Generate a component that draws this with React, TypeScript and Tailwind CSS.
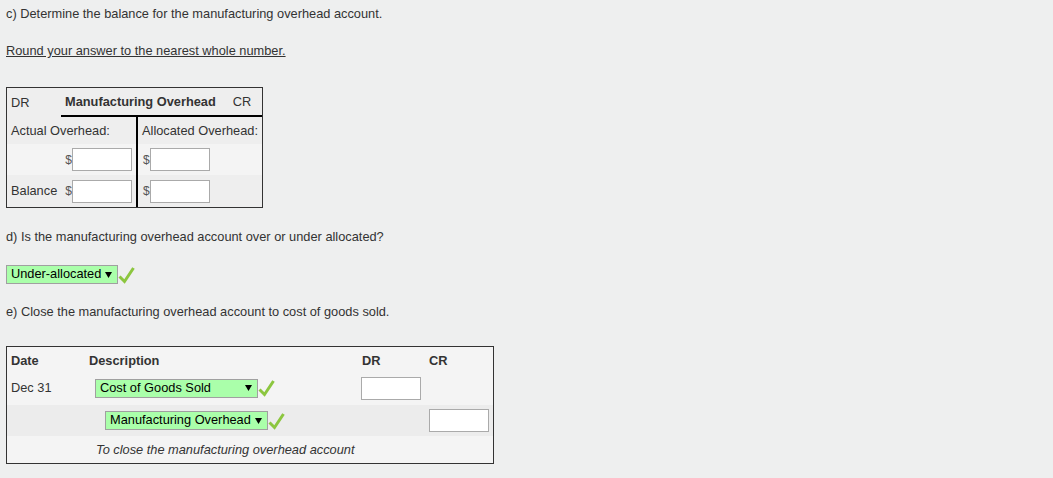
// Manufacturing overhead T-account and closing journal entry.
const FONT = "font-['Liberation_Sans',Arial,sans-serif]";

function Check() {
  return (
    <svg width="17" height="18" viewBox="0 0 17 18" className="flex-none">
      <path d="M1.5 10.5 L6.5 15.5 L15.5 2" fill="none" stroke="#8cc63f" strokeWidth="3" strokeLinejoin="miter" />
    </svg>
  );
}

function Pick({ label, w }: { label: string; w: string }) {
  return (
    <span className="flex items-center">
      <span
        className={`flex h-[19px] ${w} items-center justify-between border border-[#a0a0a0] bg-[#aaffaa] pl-[4px] pr-[5px] leading-none text-black`}
      >
        <span>{label}</span>
        <svg width="7" height="6" viewBox="0 0 7 6">
          <path d="M0 0 H7 L3.5 6 Z" fill="#000" />
        </svg>
      </span>
      <Check />
    </span>
  );
}

function Box() {
  return <span className="block h-[23px] w-[60px] border border-[#aaaaaa] bg-white" />;
}

function Money() {
  return (
    <span className="flex items-center">
      <span className="text-[12px] text-[#555]">$</span>
      <Box />
    </span>
  );
}

export default function App() {
  return (
    <div className={`${FONT} min-h-[478px] w-full bg-[#eeefef] px-[6px] pt-[6px] text-[12.8px] leading-[16px] text-[#333]`}>
      <p>c) Determine the balance for the manufacturing overhead account.</p>
      <p className="mt-[21px] underline">Round your answer to the nearest whole number.</p>

      {/* T-account */}
      <div className="mt-[28px] w-[257px] border border-[#333] bg-[#eeeeee]">
        <div className="flex h-[29px]">
          <div className="flex w-[54px] items-center pl-[4px]">DR</div>
          <div className="flex flex-1 items-center border-b-2 border-black pl-[4px]">
            <span className="font-bold">Manufacturing Overhead</span>
            <span className="ml-[17px]">CR</span>
          </div>
        </div>
        <div className="grid grid-cols-[129px_2px_1fr]">
          <div className="flex h-[27px] items-center pl-[4px]">Actual Overhead:</div>
          <div className="row-span-3 bg-black" />
          <div className="flex h-[27px] items-center pl-[4px]">Allocated Overhead:</div>

          <div className="flex h-[31px] items-center justify-end bg-[#f4f4f4] pr-[4px]">
            <Money />
          </div>
          <div className="flex h-[31px] items-center bg-[#f4f4f4] pl-[5px]">
            <Money />
          </div>

          <div className="flex h-[32px] items-center justify-between pl-[4px] pr-[4px]">
            <span>Balance</span>
            <Money />
          </div>
          <div className="flex h-[32px] items-center pl-[5px]">
            <Money />
          </div>
        </div>
      </div>

      <p className="mt-[21px]">d) Is the manufacturing overhead account over or under allocated?</p>
      <div className="mt-[20px] flex">
        <Pick label="Under-allocated" w="w-[112px]" />
      </div>

      <p className="mt-[20px]">e) Close the manufacturing overhead account to cost of goods sold.</p>

      {/* Journal entry */}
      <div className="mt-[26px] w-[488px] border border-[#333] bg-[#f4f4f4]">
        <div className="grid grid-cols-[82px_272px_68px_64px]">
          <div className="flex h-[24px] items-center pl-[4px] pt-[3px] font-bold">Date</div>
          <div className="flex h-[24px] items-center pt-[3px] font-bold">Description</div>
          <div className="flex h-[24px] items-center pl-[1px] pt-[3px] font-bold">DR</div>
          <div className="flex h-[24px] items-center pt-[3px] font-bold">CR</div>

          <div className="flex h-[34px] items-center pl-[4px]">Dec 31</div>
          <div className="flex h-[34px] items-center pl-[6px]">
            <Pick label="Cost of Goods Sold" w="w-[163px]" />
          </div>
          <div className="flex h-[34px] items-center">
            <Box />
          </div>
          <div className="h-[34px]" />

          <div className="col-span-4 grid h-[31px] grid-cols-[82px_272px_68px_64px] bg-[#ececec]">
            <div />
            <div className="flex items-center pl-[16px]">
              <Pick label="Manufacturing Overhead" w="w-[163px]" />
            </div>
            <div />
            <div className="flex items-center">
              <Box />
            </div>
          </div>

          <div className="col-span-4 flex h-[27px] items-center pl-[89px] italic">
            To close the manufacturing overhead account
          </div>
        </div>
      </div>
    </div>
  );
}
